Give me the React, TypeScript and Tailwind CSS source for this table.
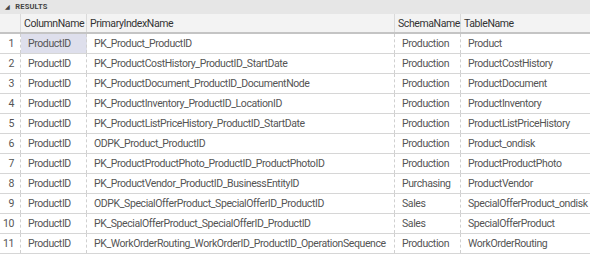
const rows = [
  ["PK_Product_ProductID", "Production", "Product"],
  ["PK_ProductCostHistory_ProductID_StartDate", "Production", "ProductCostHistory"],
  ["PK_ProductDocument_ProductID_DocumentNode", "Production", "ProductDocument"],
  ["PK_ProductInventory_ProductID_LocationID", "Production", "ProductInventory"],
  ["PK_ProductListPriceHistory_ProductID_StartDate", "Production", "ProductListPriceHistory"],
  ["ODPK_Product_ProductID", "Production", "Product_ondisk"],
  ["PK_ProductProductPhoto_ProductID_ProductPhotoID", "Production", "ProductProductPhoto"],
  ["PK_ProductVendor_ProductID_BusinessEntityID", "Purchasing", "ProductVendor"],
  ["ODPK_SpecialOfferProduct_SpecialOfferID_ProductID", "Sales", "SpecialOfferProduct_ondisk"],
  ["PK_SpecialOfferProduct_SpecialOfferID_ProductID", "Sales", "SpecialOfferProduct"],
  ["PK_WorkOrderRouting_WorkOrderID_ProductID_OperationSequence", "Production", "WorkOrderRouting"],
];

const cols = "grid grid-cols-[21px_66px_308px_66px_1fr]";

export default function App() {
  return (
    <div className="w-[590px] h-[254px] overflow-hidden bg-white font-['Roboto',sans-serif] text-[10.5px] tracking-[-0.4px]">
      <div className="h-[14px] bg-[#e6e6e6] flex items-center pl-[5px] gap-[5px] text-[7.5px] font-bold text-[#444] tracking-[0.2px]">
        <span className="text-[6px] leading-none">◢</span>
        <span>RESULTS</span>
      </div>
      <div className={`${cols} h-[20px] bg-[#f3f3f3] border-b-2 border-[#c4c4c4] text-[#333]`}>
        <div className="border-r border-[#dadada]" />
        <div className="border-r border-[#dadada] pl-[3px] pt-px flex items-center">ColumnName</div>
        <div className="border-r border-[#dadada] pl-[3px] pt-px flex items-center">PrimaryIndexName</div>
        <div className="border-r border-[#dadada] pl-[3px] pt-px flex items-center">SchemaName</div>
        <div className="pl-[3px] pt-px flex items-center">TableName</div>
      </div>
      {rows.map((r, i) => (
        <div key={i} className={`${cols} h-[20px] border-b border-[#d6d6d6] text-[#555]`}>
          <div className="border-r border-dashed border-[#d0d0d0] flex items-center justify-end pr-[6px] pt-px">{i + 1}</div>
          <div className={`border-r border-dashed border-[#d0d0d0] pl-[7px] pt-px flex items-center ${i === 0 ? "bg-[#dedfec]" : ""}`}>ProductID</div>
          <div className="border-r border-dashed border-[#d0d0d0] pl-[7px] pt-px flex items-center whitespace-nowrap">{r[0]}</div>
          <div className="border-r border-dashed border-[#d0d0d0] pl-[7px] pt-px flex items-center">{r[1]}</div>
          <div className="pl-[7px] pt-px flex items-center whitespace-nowrap">{r[2]}</div>
        </div>
      ))}
    </div>
  );
}
